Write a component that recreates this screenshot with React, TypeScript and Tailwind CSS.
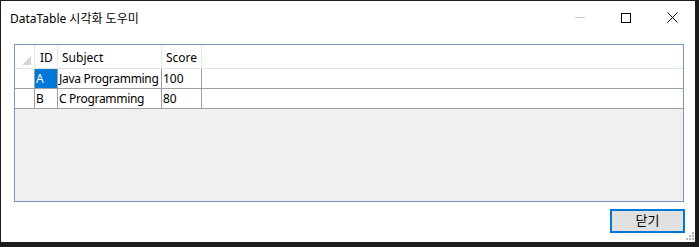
const FONT = { fontFamily: '"Segoe UI", "Noto Sans", "Noto Sans CJK KR", sans-serif' };

const ROWS = [
  { id: "A", subject: "Java Programming", score: "100" },
  { id: "B", subject: "C Programming", score: "80" },
];

function TitleButtons() {
  return (
    <div className="flex h-full">
      <div className="flex w-[46px] items-center justify-center">
        <div className="h-px w-[10px] bg-[#c6c6c6]" />
      </div>
      <div className="flex w-[46px] items-center justify-center">
        <div className="h-[10px] w-[10px] border border-black" />
      </div>
      <div className="flex w-[46px] items-center justify-center">
        <svg width="11" height="11" viewBox="0 0 11 11" aria-hidden="true">
          <path d="M0.5 0.5L10.5 10.5M10.5 0.5L0.5 10.5" stroke="black" strokeWidth="1" />
        </svg>
      </div>
    </div>
  );
}

function Grip() {
  const dots = [
    [8, 0], [8, 3], [5, 3], [8, 6], [5, 6], [2, 6],
  ];
  return (
    <svg width="10" height="9" viewBox="0 0 10 9" aria-hidden="true">
      {dots.map(([x, y]) => (
        <rect key={`${x}-${y}`} x={x} y={y} width="2" height="2" fill="#b4b4b4" />
      ))}
    </svg>
  );
}

export default function App() {
  return (
    <div className="h-[247px] w-[699px] bg-[#1c1c1c] pl-px pt-px" style={FONT}>
      <div className="flex h-[241px] w-[694px] flex-col bg-white text-[12px] text-black">
        {/* Title bar */}
        <div className="flex h-[33px] items-center justify-between">
          <span className="pl-[9px] pt-[2px] text-[12px]">DataTable 시각화 도우미</span>
          <TitleButtons />
        </div>

        {/* Grid */}
        <div className="ml-[13px] mt-[10px] flex h-[158px] w-[670px] flex-col border border-[#6d98c9] bg-[#f0f0f0] text-[12px]">
          <div className="flex h-[24px] border-b border-[#e2e2e2] bg-white">
            <div className="relative w-[20px] border-r border-[#e5e5e5]">
              <svg className="absolute bottom-[3px] right-[3px]" width="9" height="9" viewBox="0 0 9 9" aria-hidden="true">
                <path d="M9 0L9 9L0 9Z" fill="#d6d6d6" />
              </svg>
            </div>
            <div className="flex w-[23px] items-center border-r border-[#e5e5e5] pl-[5px] pt-[3px]">ID</div>
            <div className="flex w-[104px] items-center border-r border-[#e5e5e5] pl-[4px] pt-[3px]">Subject</div>
            <div className="flex w-[40px] items-center border-r border-[#e5e5e5] pl-[4px] pt-[3px]">Score</div>
            <div className="flex-1" />
          </div>
          {ROWS.map((row, i) => (
            <div key={row.id} className="flex h-[20px] border-b border-[#a0a0a0] bg-white">
              <div className="w-[20px] border-r border-[#a0a0a0] bg-white" />
              <div className={`flex w-[23px] items-center border-r border-[#a0a0a0] pl-px ${i === 0 ? "bg-[#0078d7] text-white" : ""}`}>
                {row.id}
              </div>
              <div className="flex w-[104px] items-center overflow-hidden whitespace-nowrap border-r border-[#a0a0a0] pl-px tracking-[-0.3px]">
                {row.subject}
              </div>
              <div className="flex w-[40px] items-center border-r border-[#a0a0a0] pl-px">{row.score}</div>
              <div className="flex-1" />
            </div>
          ))}
          <div className="flex-1" />
        </div>

        {/* Footer */}
        <div className="flex flex-1 items-start justify-end">
          <div className="mr-[10px] mt-[7px] flex h-[24px] w-[75px] items-center justify-center border border-[#0078d7] bg-[#e1e1e1] text-[13px] shadow-[inset_0_0_0_1px_#0078d7]">
            닫기
          </div>
        </div>
        <div className="-mt-[10px] flex justify-end pb-px pr-px">
          <Grip />
        </div>
      </div>
    </div>
  );
}
